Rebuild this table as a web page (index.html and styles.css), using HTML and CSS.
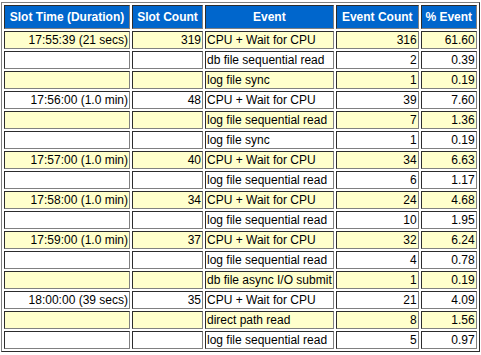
FILE: index.html
```html
<!DOCTYPE html>
<html>
<head>
  <title>Active Session History - Activity Over Time</title>
  <link rel="stylesheet" href="styles.css">
</head>
<body>
  <table class="tdiff">
    <tr>
      <th class="awrbg col-slot">Slot Time (Duration)</th>
      <th class="awrbg col-count">Slot Count</th>
      <th class="awrbg col-event">Event</th>
      <th class="awrbg col-ecount">Event Count</th>
      <th class="awrbg col-pct">% Event</th>
    </tr>
    <tr>
      <td class="awrnc num">17:55:39 (21 secs)</td>
      <td class="awrnc num">319</td>
      <td class="awrnc">CPU + Wait for CPU</td>
      <td class="awrnc num">316</td>
      <td class="awrnc num">61.60</td>
    </tr>
    <tr>
      <td class="awrc num"></td>
      <td class="awrc num"></td>
      <td class="awrc">db file sequential read</td>
      <td class="awrc num">2</td>
      <td class="awrc num">0.39</td>
    </tr>
    <tr>
      <td class="awrnc num"></td>
      <td class="awrnc num"></td>
      <td class="awrnc">log file sync</td>
      <td class="awrnc num">1</td>
      <td class="awrnc num">0.19</td>
    </tr>
    <tr>
      <td class="awrc num">17:56:00 (1.0 min)</td>
      <td class="awrc num">48</td>
      <td class="awrc">CPU + Wait for CPU</td>
      <td class="awrc num">39</td>
      <td class="awrc num">7.60</td>
    </tr>
    <tr>
      <td class="awrnc num"></td>
      <td class="awrnc num"></td>
      <td class="awrnc">log file sequential read</td>
      <td class="awrnc num">7</td>
      <td class="awrnc num">1.36</td>
    </tr>
    <tr>
      <td class="awrc num"></td>
      <td class="awrc num"></td>
      <td class="awrc">log file sync</td>
      <td class="awrc num">1</td>
      <td class="awrc num">0.19</td>
    </tr>
    <tr>
      <td class="awrnc num">17:57:00 (1.0 min)</td>
      <td class="awrnc num">40</td>
      <td class="awrnc">CPU + Wait for CPU</td>
      <td class="awrnc num">34</td>
      <td class="awrnc num">6.63</td>
    </tr>
    <tr>
      <td class="awrc num"></td>
      <td class="awrc num"></td>
      <td class="awrc">log file sequential read</td>
      <td class="awrc num">6</td>
      <td class="awrc num">1.17</td>
    </tr>
    <tr>
      <td class="awrnc num">17:58:00 (1.0 min)</td>
      <td class="awrnc num">34</td>
      <td class="awrnc">CPU + Wait for CPU</td>
      <td class="awrnc num">24</td>
      <td class="awrnc num">4.68</td>
    </tr>
    <tr>
      <td class="awrc num"></td>
      <td class="awrc num"></td>
      <td class="awrc">log file sequential read</td>
      <td class="awrc num">10</td>
      <td class="awrc num">1.95</td>
    </tr>
    <tr>
      <td class="awrnc num">17:59:00 (1.0 min)</td>
      <td class="awrnc num">37</td>
      <td class="awrnc">CPU + Wait for CPU</td>
      <td class="awrnc num">32</td>
      <td class="awrnc num">6.24</td>
    </tr>
    <tr>
      <td class="awrc num"></td>
      <td class="awrc num"></td>
      <td class="awrc">log file sequential read</td>
      <td class="awrc num">4</td>
      <td class="awrc num">0.78</td>
    </tr>
    <tr>
      <td class="awrnc num"></td>
      <td class="awrnc num"></td>
      <td class="awrnc">db file async I/O submit</td>
      <td class="awrnc num">1</td>
      <td class="awrnc num">0.19</td>
    </tr>
    <tr>
      <td class="awrc num">18:00:00 (39 secs)</td>
      <td class="awrc num">35</td>
      <td class="awrc">CPU + Wait for CPU</td>
      <td class="awrc num">21</td>
      <td class="awrc num">4.09</td>
    </tr>
    <tr>
      <td class="awrnc num"></td>
      <td class="awrnc num"></td>
      <td class="awrnc">direct path read</td>
      <td class="awrnc num">8</td>
      <td class="awrnc num">1.56</td>
    </tr>
    <tr>
      <td class="awrc num"></td>
      <td class="awrc num"></td>
      <td class="awrc">log file sequential read</td>
      <td class="awrc num">5</td>
      <td class="awrc num">0.97</td>
    </tr>
  </table>
</body>
</html>
```

FILE: styles.css
```css
body {
  margin: 0;
  padding: 2px 1px;
  background-color: #fff;
}

table.tdiff {
  border: 1px outset #808080;
  border-spacing: 2px;
  font-family: "Liberation Sans", Arial, sans-serif;
  font-size: 12px;
  line-height: 14px;
}

th.awrbg {
  box-sizing: border-box;
  color: #fff;
  background-color: #0066CC;
  font-weight: bold;
  border: 1px inset #808080;
  padding: 4px 2px;
  text-align: center;
}

.col-slot { width: 126px; }
.col-count { width: 71px; }
.col-event { width: 128px; }
.col-ecount { width: 83px; }
.col-pct { width: 56px; }

td.awrc,
td.awrnc {
  color: #000;
  border: 1px inset #808080;
  padding: 1px;
  vertical-align: top;
  white-space: nowrap;
}

td.awrc {
  background-color: #fff;
}

td.awrnc {
  background-color: #FFFFCC;
}

td.num {
  text-align: right;
}
```
